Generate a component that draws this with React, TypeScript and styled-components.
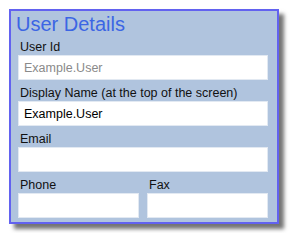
import React from "react";
import styled, { createGlobalStyle } from "styled-components";

const GlobalStyle = createGlobalStyle`
  html, body {
    margin: 0;
    padding: 0;
    background: #ffffff;
  }
  #root {
    padding: 9px;
  }
`;

const Panel = styled.div`
  box-sizing: border-box;
  width: 270px;
  height: 215px;
  padding: 2px 9px 4px 7px;
  background-color: #b0c4de;
  border: 2px solid #6262f0;
  box-shadow: 5px 5px 4px rgba(0, 0, 0, 0.55);
  font-family: "Liberation Sans", Arial, sans-serif;
  display: flex;
  flex-direction: column;
`;

const Title = styled.h2`
  margin: 0 0 5px -2px;
  font-size: 20px;
  line-height: 22px;
  font-weight: normal;
  color: #3c66e4;
`;

const Fields = styled.div`
  display: flex;
  flex-direction: column;
  gap: 6px;
`;

const Row = styled.div`
  display: grid;
  grid-template-columns: 1fr 1fr;
  column-gap: 8px;
`;

const Field = styled.div`
  display: flex;
  flex-direction: column;
  min-width: 0;
`;

const Label = styled.label`
  font-size: 12.5px;
  line-height: 14px;
  padding-left: 2px;
  margin-bottom: 1px;
  color: #111111;
`;

const Input = styled.input<{ $muted?: boolean }>`
  box-sizing: border-box;
  width: 100%;
  height: 25px;
  margin: 0;
  padding: 0 5px;
  border: 1px solid #e2e9f2;
  background: #ffffff;
  outline: none;
  font-family: "Liberation Sans", Arial, sans-serif;
  font-size: 12.5px;
  color: ${(p) => (p.$muted ? "#8a8a8a" : "#000000")};
`;

export default function App() {
  return (
    <>
      <GlobalStyle />
      <Panel>
        <Title>User Details</Title>
        <Fields>
          <Field>
            <Label>User Id</Label>
            <Input $muted readOnly defaultValue="Example.User" />
          </Field>
          <Field>
            <Label>Display Name (at the top of the screen)</Label>
            <Input defaultValue="Example.User" />
          </Field>
          <Field>
            <Label>Email</Label>
            <Input defaultValue="" />
          </Field>
          <Row>
            <Field>
              <Label>Phone</Label>
              <Input defaultValue="" />
            </Field>
            <Field>
              <Label>Fax</Label>
              <Input defaultValue="" />
            </Field>
          </Row>
        </Fields>
      </Panel>
    </>
  );
}
